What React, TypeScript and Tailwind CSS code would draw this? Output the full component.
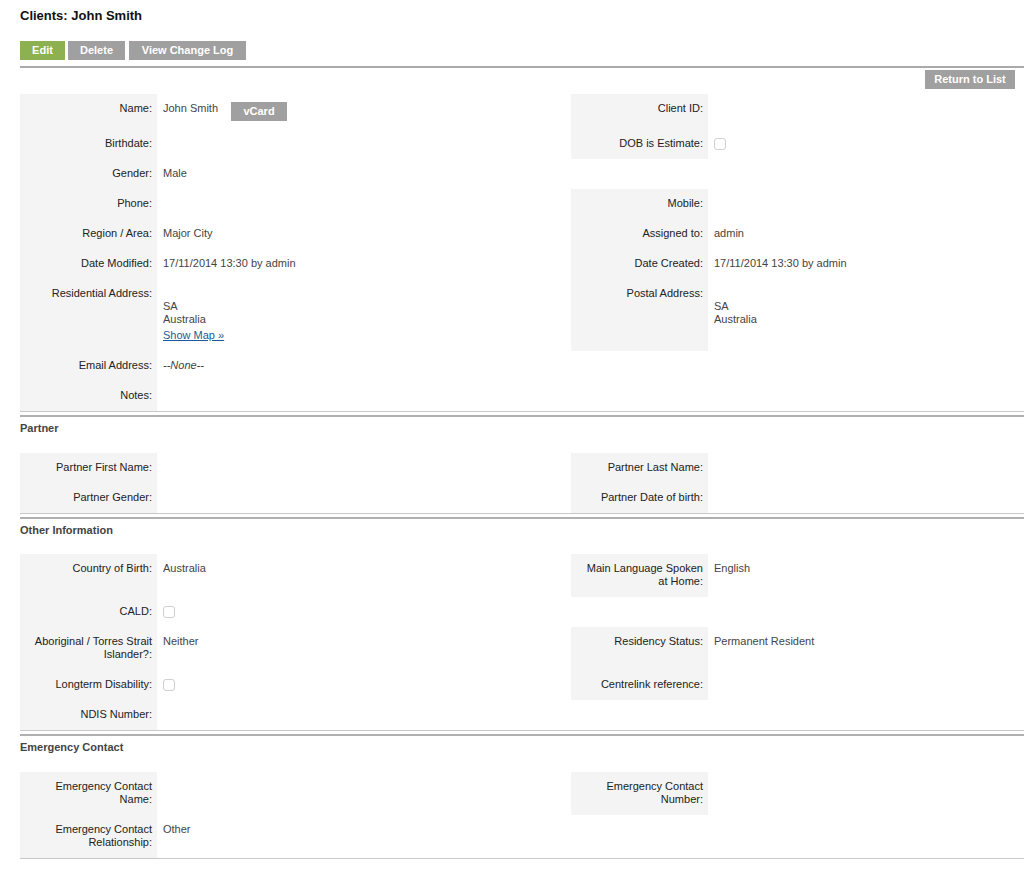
import React from "react";

type Row = {
  l: string;
  v?: React.ReactNode;
  rl?: string;
  rv?: React.ReactNode;
};

const LBL =
  "bg-[#f4f4f4] text-right pl-[6px] pr-[5px] pt-[8px] pb-[9px] text-[#222]";
const VAL = "pl-[6px] pr-[6px] pt-[8px] pb-[9px] text-[#444]";
const EMPTY = "pt-[8px] pb-[9px]";

function Checkbox() {
  return (
    <span className="inline-block w-[12px] h-[12px] rounded-[3px] border border-[#cfcfcf] bg-white align-top mt-[1px]" />
  );
}

function Grid({ rows }: { rows: Row[] }) {
  return (
    <div className="grid grid-cols-[137px_414px_137px_1fr] border-b border-[#c8c8c8]">
      {rows.map((r, i) => (
        <React.Fragment key={i}>
          <div className={LBL}>{r.l}</div>
          <div className={VAL}>{r.v}</div>
          {r.rl ? (
            <div className={LBL}>{r.rl}</div>
          ) : (
            <div className={EMPTY} />
          )}
          <div className={VAL}>{r.rv}</div>
        </React.Fragment>
      ))}
    </div>
  );
}

function Section({ title, extra }: { title: string; extra?: boolean }) {
  return (
    <div
      className={
        "mt-[3px] border-t-2 border-[#b0b0b0] pt-[5px] font-bold text-[#444] leading-[13px] " +
        (extra ? "pb-[18px]" : "pb-[17px]")
      }
    >
      {title}
    </div>
  );
}

function Btn({
  children,
  green,
  className = "",
}: {
  children: React.ReactNode;
  green?: boolean;
  className?: string;
}) {
  return (
    <span
      className={
        "inline-block h-[19px] leading-[19px] text-[11px] font-bold text-white text-center whitespace-nowrap " +
        (green ? "bg-[#8db050] " : "bg-[#a0a0a0] ") +
        className
      }
    >
      {children}
    </span>
  );
}

export default function App() {
  const main: Row[] = [
    {
      l: "Name:",
      v: (
        <div className="flex items-start -mb-[1px]">
          <span>John Smith</span>
          <Btn className="ml-[13px] w-[56px]">vCard</Btn>
        </div>
      ),
      rl: "Client ID:",
    },
    { l: "Birthdate:", rl: "DOB is Estimate:", rv: <Checkbox /> },
    { l: "Gender:", v: "Male" },
    { l: "Phone:", rl: "Mobile:" },
    { l: "Region / Area:", v: "Major City", rl: "Assigned to:", rv: "admin" },
    {
      l: "Date Modified:",
      v: "17/11/2014 13:30 by admin",
      rl: "Date Created:",
      rv: "17/11/2014 13:30 by admin",
    },
    {
      l: "Residential Address:",
      v: (
        <div>
          <div className="h-[13px]" />
          <div>SA</div>
          <div>Australia</div>
          <div className="mt-[3px]">
            <a className="text-[#1c5a99] underline cursor-pointer">Show Map »</a>
          </div>
        </div>
      ),
      rl: "Postal Address:",
      rv: (
        <div>
          <div className="h-[13px]" />
          <div>SA</div>
          <div>Australia</div>
        </div>
      ),
    },
    { l: "Email Address:", v: <span className="italic">--None--</span> },
    { l: "Notes:" },
  ];

  const partner: Row[] = [
    { l: "Partner First Name:", rl: "Partner Last Name:" },
    { l: "Partner Gender:", rl: "Partner Date of birth:" },
  ];

  const other: Row[] = [
    {
      l: "Country of Birth:",
      v: "Australia",
      rl: "Main Language Spoken at Home:",
      rv: "English",
    },
    { l: "CALD:", v: <Checkbox /> },
    {
      l: "Aboriginal / Torres Strait Islander?:",
      v: "Neither",
      rl: "Residency Status:",
      rv: "Permanent Resident",
    },
    { l: "Longterm Disability:", v: <Checkbox />, rl: "Centrelink reference:" },
    { l: "NDIS Number:" },
  ];

  const emergency: Row[] = [
    {
      l: "Emergency Contact Name:",
      rl: "Emergency Contact Number:",
    },
    { l: "Emergency Contact Relationship:", v: "Other" },
  ];

  return (
    <div
      className="min-h-[870px] bg-white pl-[20px] pt-[8px] text-[11px] leading-[13px] text-[#333]"
      style={{ fontFamily: '"Liberation Sans", Arial, Helvetica, sans-serif' }}
    >
      <h1 className="text-[13px] leading-[16px] font-bold text-[#111]">
        Clients: John Smith
      </h1>

      <div className="mt-[17px] flex pb-[6px] border-b-2 border-[#aaaaaa]">
        <Btn green className="w-[45px]">
          Edit
        </Btn>
        <Btn className="ml-[3px] w-[57px]">Delete</Btn>
        <Btn className="ml-[4px] w-[117px]">View Change Log</Btn>
      </div>

      <div className="mt-[2px] mb-[5px] flex justify-end pr-[9px]">
        <Btn className="w-[90px]">Return to List</Btn>
      </div>

      <Grid rows={main} />

      <Section title="Partner" extra />
      <Grid rows={partner} />

      <Section title="Other Information" />
      <Grid rows={other} />

      <Section title="Emergency Contact" extra />
      <Grid rows={emergency} />
    </div>
  );
}
